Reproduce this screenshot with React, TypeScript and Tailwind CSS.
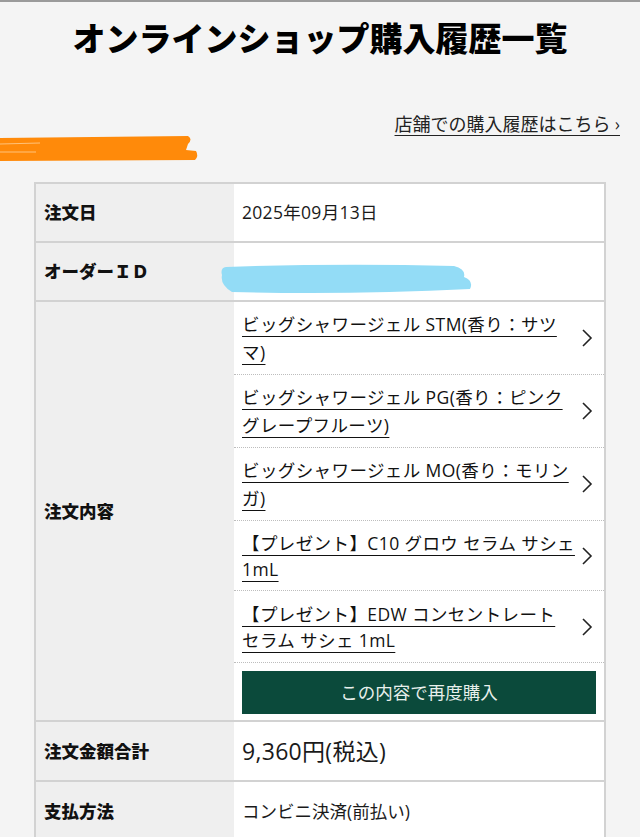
import React from "react";

const items: { a: string; b: string; cls: string }[] = [
  { a: "ビッグシャワージェル STM(香り：サツ", b: "マ)", cls: "py-[8px] leading-[28px]" },
  { a: "ビッグシャワージェル PG(香り：ピンク", b: "グレープフルーツ)", cls: "py-[8px] leading-[28px]" },
  { a: "ビッグシャワージェル MO(香り：モリン", b: "ガ)", cls: "py-[8px] leading-[28px]" },
  { a: "【プレゼント】C10 グロウ セラム サシェ", b: "1mL", cls: "py-[8.5px] leading-[26px]" },
  { a: "【プレゼント】EDW コンセントレート", b: "セラム サシェ 1mL", cls: "py-[9.5px] leading-[26px]" },
];

function Chevron() {
  return (
    <svg width="12" height="20" viewBox="0 0 12 20" className="shrink-0">
      <polyline points="2,2 10,10 2,18" fill="none" stroke="#222" strokeWidth="1.6" />
    </svg>
  );
}

function Row({ label, children, className = "" }: { label: string; children: React.ReactNode; className?: string }) {
  return (
    <div className={`grid grid-cols-[198px_1fr] border-b-2 border-[#d2d2d2] ${className}`}>
      <div
        className="flex items-center bg-[#efefef] pl-[8px] text-[17.5px] font-black text-[#111]"
        style={{ fontFamily: '"Noto Sans CJK JP", sans-serif' }}
      >
        {label}
      </div>
      <div className="bg-white">{children}</div>
    </div>
  );
}

export default function App() {
  return (
    <div
      className="min-h-screen border-t-2 border-[#9a9a9a] bg-[#f4f4f4] text-[#1a1a1a]"
      style={{ fontFamily: '"Noto Sans CJK JP", "Noto Sans", sans-serif' }}
    >
      <h1 className="pt-[10px] text-center text-[33px] font-black leading-[50px] text-black">
        オンラインショップ購入履歴一覧
      </h1>

      <div className="mt-[48px] flex justify-end pr-[20px]">
        <a className="text-[18px] leading-[26px] text-[#222] underline underline-offset-[4px]">
          店舗での購入履歴はこちら ›
        </a>
      </div>

      <svg width="200" height="28" viewBox="0 0 200 28" className="block mt-[-1px]">
        <path d="M0 3 L188 1 Q193 4 188 9 L186 15 L196 16 Q199 21 195 25 L0 26 Z" fill="#ff8a0a" />
        <path d="M0 9 L40 8" stroke="#ffc27a" strokeWidth="1" />
        <path d="M0 17 L36 17" stroke="#ffc27a" strokeWidth="1" />
      </svg>

      <div
        className="mx-[34px] mt-[19px] border-x-2 border-t-2 border-[#d2d2d2]"
        style={{ fontFamily: '"Open Sans", "Noto Sans CJK JP", sans-serif' }}
      >
        <Row label="注文日" className="h-[59px]">
          <div className="flex h-full items-center pl-[8px] text-[17.5px] tracking-[0.3px]">2025年09月13日</div>
        </Row>
        <Row label="オーダーＩＤ" className="h-[59px]">
          <div className="flex h-full items-center">
            <svg width="260" height="34" viewBox="0 0 260 34" className="ml-[-16px] mt-[12px]">
              <path
                d="M8 6 Q120 2 236 5 Q248 8 246 16 Q256 20 252 28 Q130 34 14 31 Q2 24 4 14 Q2 7 8 6 Z"
                fill="#93dcf6"
              />
            </svg>
          </div>
        </Row>
        <Row label="注文内容">
          <div className="flex flex-col">
            {items.map(({ a, b, cls }) => (
              <div
                key={a}
                className={`flex items-center border-b border-dotted border-[#bdbdbd] pl-[8px] ${cls}`}
              >
                <span className="w-[333px] whitespace-nowrap text-[17.5px] tracking-[0.4px] text-[#111] underline underline-offset-[5px]">
                  {a}
                  <br />
                  {b}
                </span>
                <div className="ml-[6px]">
                  <Chevron />
                </div>
              </div>
            ))}
            <div className="px-[8px] pb-[6px] pt-[8px]">
              <button className="flex h-[43px] w-full items-center justify-center bg-[#0b4a3b] text-[17.5px] text-[#e8f0ec]">
                この内容で再度購入
              </button>
            </div>
          </div>
        </Row>
        <Row label="注文金額合計" className="h-[60px]">
          <div className="flex h-full items-center pl-[8px] text-[23px] tracking-[0.3px]">9,360円(税込)</div>
        </Row>
        <Row label="支払方法" className="h-[60px]">
          <div className="flex h-full items-center pl-[8px] text-[17.5px]">コンビニ決済(前払い)</div>
        </Row>
      </div>
    </div>
  );
}
